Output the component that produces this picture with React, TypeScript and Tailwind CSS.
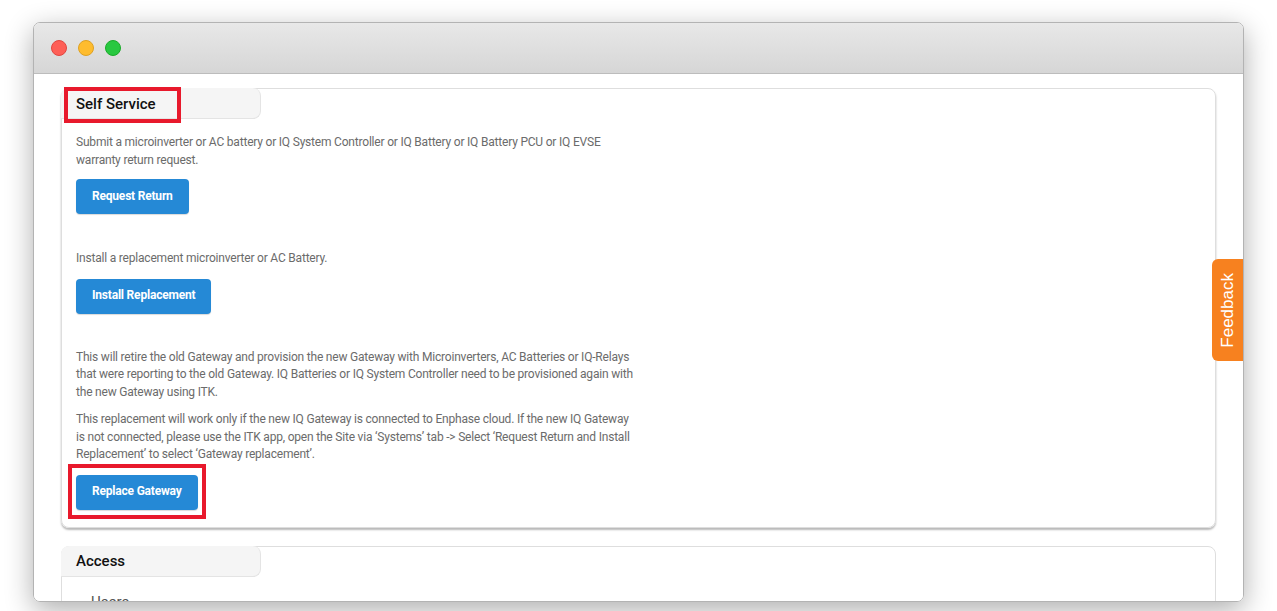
import React from "react"

const font = { fontFamily: "Roboto, 'Liberation Sans', Arial, sans-serif" }

function Btn({ label }: { label: string }) {
  return (
    <button className="h-[35px] px-4 rounded-[4px] bg-[#2589d6] text-white text-[12px] font-bold tracking-[-0.2px] shadow-[0_1px_1px_rgba(0,0,0,0.15)]">
      {label}
    </button>
  )
}

function Tab({ title }: { title: string }) {
  return (
    <div className="w-[200px] h-[31px] bg-[#f5f5f5] border-r border-b border-[#e4e4e4] rounded-tl-[8px] rounded-tr-[8px] rounded-br-[8px] flex items-center pl-[15px] pt-[2px] -mt-px -ml-px">
      <span className="text-[15px] font-medium text-[#111]">{title}</span>
    </div>
  )
}

export default function App() {
  return (
    <div className="w-[1277px] h-[611px] bg-white overflow-hidden pt-[22px] pl-[33px]" style={font}>
      <div className="relative w-[1211px] h-[580px] rounded-[7px] border border-[#b3b3b3] overflow-hidden flex flex-col shadow-[0_8px_28px_rgba(0,0,0,0.32)]">
        {/* title bar */}
        <div className="h-[51px] shrink-0 bg-gradient-to-b from-[#e8e8e8] to-[#d6d6d6] border-b border-[#bcbcbc] flex items-center pl-[17px] gap-[11px]">
          <span className="w-4 h-4 rounded-full bg-[#fe5f57] border border-[#e14640]" />
          <span className="w-4 h-4 rounded-full bg-[#febc2e] border border-[#dea123]" />
          <span className="w-4 h-4 rounded-full bg-[#28c840] border border-[#1aab29]" />
        </div>

        {/* content */}
        <div className="relative flex-1 bg-white overflow-hidden px-[27px] pt-[14px]">
          {/* Self Service card */}
          <div className="relative border border-[#dedede] rounded-[8px] shadow-[0_2px_2px_rgba(0,0,0,0.28)] pb-[17px]">
            <Tab title="Self Service" />
            <div className="absolute left-[2px] -top-[2px] w-[117px] h-[36px] border-4 border-[#e8192c]" />

            <div className="pl-[14px] text-[12px] leading-[17.5px] tracking-[-0.2px] text-[#6b6b6b]">
              <p className="w-[560px] mt-[15px]">
                Submit a microinverter or AC battery or IQ System Controller or IQ Battery or IQ Battery PCU or IQ EVSE
                warranty return request.
              </p>
              <div className="mt-[10px]">
                <Btn label="Request Return" />
              </div>

              <p className="w-[560px] mt-[36px]">Install a replacement microinverter or AC Battery.</p>
              <div className="mt-[11px]">
                <Btn label="Install Replacement" />
              </div>

              <p className="w-[560px] mt-[35px]">
                This will retire the old Gateway and provision the new Gateway with Microinverters, AC Batteries or IQ-Relays
                that were reporting to the old Gateway. IQ Batteries or IQ System Controller need to be provisioned again with
                the new Gateway using ITK.
              </p>
              <p className="w-[560px] mt-[10px]">
                This replacement will work only if the new IQ Gateway is connected to Enphase cloud. If the new IQ Gateway
                is not connected, please use the ITK app, open the Site via ‘Systems’ tab -&gt; Select ‘Request Return and Install
                Replacement’ to select ‘Gateway replacement’.
              </p>
              <div className="relative mt-[11px] inline-block">
                <Btn label="Replace Gateway" />
                <div className="absolute -left-[8px] -top-[11px] w-[138px] h-[55px] border-4 border-[#e8192c]" />
              </div>
            </div>
          </div>

          {/* Access card */}
          <div className="mt-[18px] border border-[#dedede] rounded-[8px] h-[120px]">
            <Tab title="Access" />
            <fieldset className="mx-[14px] mt-[14px] border-t border-[#c8c8c8]">
              <legend className="ml-[13px] px-[2px] text-[15px] text-[#555]">Users</legend>
            </fieldset>
          </div>

          {/* Feedback tab */}
          <div className="absolute right-0 top-[185px] w-[31px] h-[102px] bg-[#f7811f] rounded-l-[6px] flex items-center justify-center">
            <span
              className="text-white text-[17px] [writing-mode:vertical-rl] rotate-180"
              style={{ fontFamily: "'Liberation Sans', Arial, sans-serif" }}
            >
              Feedback
            </span>
          </div>
        </div>
      </div>
    </div>
  )
}
